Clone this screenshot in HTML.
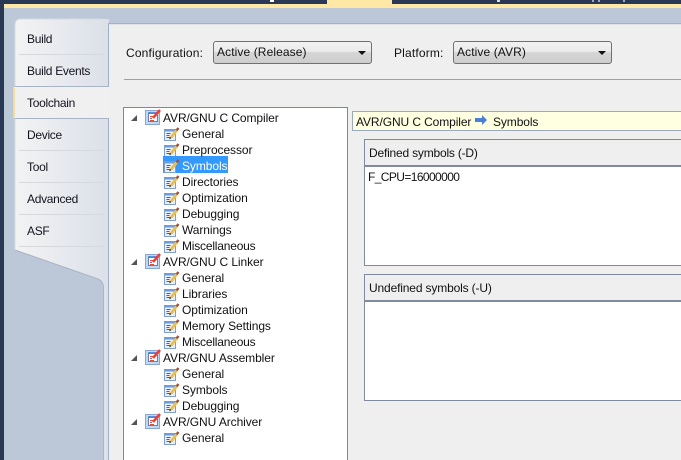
<!DOCTYPE html>
<html><head><meta charset="utf-8"><style>
html,body{margin:0;padding:0;width:681px;height:460px;overflow:hidden;background:#bcc7d8}
body{position:relative;font:12px/16px "Liberation Sans",sans-serif;color:#111;letter-spacing:-.08px}
div,span.t,svg.i{position:absolute}
.t{position:absolute;white-space:nowrap;height:16px}
.tab{position:absolute;left:27px;white-space:nowrap;color:#15121f;letter-spacing:-.3px}
.sep{position:absolute;left:19px;width:85px;height:1px;background:#d4d8df}
.combo{position:absolute;top:41px;height:21px;border:1px solid #707070;border-radius:3px;background:linear-gradient(#f2f2f2 0,#ebebeb 45%,#d6d6d6 50%,#cdcdcd 100%);line-height:21px;padding-left:3px;box-sizing:content-box;letter-spacing:.1px}
.combo:after{content:"";position:absolute;right:5px;top:9px;border-left:4px solid transparent;border-right:4px solid transparent;border-top:4px solid #111}
</style></head><body>
<svg width="0" height="0" style="position:absolute"><defs>
<g id="root"><rect x=".5" y="2.500" width="14" height="14" fill="#c4d8f2" stroke="#8aa5d0"/><rect x="3.500" y="5.500" width="9" height="8" fill="#fff" stroke="#4f86c8"/><path d="M3 4.500h10" stroke="#5a8fd0"/><path d="M5 8.500h3M5 10.500h2M5 12.500h4" stroke="#e04a40"/><path d="M8 10L15 2" stroke="#e8413a" stroke-width="2.500"/></g>
<g id="ch"><path d="M.5 3.500h11v11H.5z" fill="#e8f0fa" stroke="#7f9fd0"/><path d="M.5 3.500h11v2H.5z" fill="#6f9ad8"/><path d="M2.500 7.500h4M2.500 9.500h3M2.500 11.500h4" stroke="#525f75"/><path d="M7 11.500L12.500 4.500" stroke="#e9c050" stroke-width="3"/><path d="M12.500 4.500L14.500 2" stroke="#a5503a" stroke-width="2.500"/><path d="M5.500 13l1.500-1.500" stroke="#333"/></g>
</defs></svg>

<div style="left:0;top:0;width:681px;height:4px;background:#293955"></div>
<div style="left:0;top:0;width:4px;height:460px;background:#293955"></div>
<div style="left:4px;top:4px;width:677px;height:4px;background:#ffe8a6"></div>
<div style="left:327px;top:0;width:65px;height:4px;background:#ffe8a6"></div>
<div style="left:270px;top:0;width:4px;height:2px;background:#fff"></div>
<div style="left:497px;top:0;width:3px;height:2px;background:#d8dde6"></div>
<div style="left:592px;top:0;width:2px;height:2px;background:#9aa5b8"></div>
<div style="left:598px;top:0;width:2px;height:2px;background:#9aa5b8"></div>
<div style="left:623px;top:0;width:2px;height:2px;background:#9aa5b8"></div>

<!-- tab column -->
<svg style="position:absolute;left:0;top:0" width="110" height="460">
<defs><linearGradient id="tg" x1="0" x2="1" y1="0" y2="0"><stop offset="0" stop-color="#f3f3f3"/><stop offset="1" stop-color="#dbe0e8"/></linearGradient></defs>
<path d="M15 25Q15 19 21 19H109V287H103Q103 281 98 279L15 250Z" fill="url(#tg)"/>
<path d="M15 250L98 279Q103 281 103.500 287V460" fill="none" stroke="#a9b5c7" stroke-width="1"/>
<path d="M15 250V25Q15 19 21 19H100" fill="none" stroke="#d5dbe4"/>
<rect x="104" y="282" width="4" height="178" fill="#dde2ea"/>
</svg>
<div style="left:108px;top:23px;width:573px;height:437px;background:#efefef;border-top:1px solid #a5b2c5;border-left:1px solid #9db0c8"></div>
<div style="left:109px;top:24px;width:572px;height:1px;background:#dfe3e9"></div>

<div class="sep" style="top:54px"></div>
<div class="sep" style="top:86px;background:#a9b5c7;left:15px;width:94px"></div>
<div class="sep" style="top:150px"></div>
<div class="sep" style="top:182px"></div>
<div class="sep" style="top:214px"></div>
<div class="sep" style="top:246px"></div>
<div style="left:13px;top:87px;width:96px;height:31px;background:#f0f0f0;border-radius:2px 0 0 2px"></div>
<div style="left:13px;top:88px;width:2px;height:29px;background:#f5dc98"></div>
<div style="left:15px;top:118px;width:94px;height:1px;background:#a9b5c7"></div>

<span class="tab" style="top:31px">Build</span>
<span class="tab" style="top:63px">Build Events</span>
<span class="tab" style="top:95px">Toolchain</span>
<span class="tab" style="top:127px">Device</span>
<span class="tab" style="top:159px">Tool</span>
<span class="tab" style="top:191px">Advanced</span>
<span class="tab" style="top:223px">ASF</span>

<!-- toolbar -->
<span class="t" style="left:126px;top:45px;letter-spacing:.17px">Configuration:</span>
<div class="combo" style="left:213px;width:154px">Active (Release)</div>
<span class="t" style="left:394px;top:45px;letter-spacing:.17px">Platform:</span>
<div class="combo" style="left:453px;width:154px">Active (AVR)</div>
<div style="left:124px;top:79px;width:557px;height:1px;background:#a0a0a0"></div>

<!-- tree -->
<div style="left:123px;top:107px;width:223px;height:353px;background:#fff;border:1px solid #828790;border-bottom:0"></div>
<svg style="position:absolute;left:123px;top:107px" width="224" height="353">
<path d="M8 14h6V8z" fill="#555"/><use href="#root" x="22" y="1"/>
<use href="#ch" x="41" y="19"/><use href="#ch" x="41" y="35"/>
<rect x="40" y="49" width="65" height="17" fill="#3399ff"/>
<use href="#ch" x="41" y="51"/><use href="#ch" x="41" y="67"/><use href="#ch" x="41" y="83"/><use href="#ch" x="41" y="99"/><use href="#ch" x="41" y="115"/><use href="#ch" x="41" y="131"/>
<path d="M8 158h6V152z" fill="#555"/><use href="#root" x="22" y="145"/>
<use href="#ch" x="41" y="163"/><use href="#ch" x="41" y="179"/><use href="#ch" x="41" y="195"/><use href="#ch" x="41" y="211"/><use href="#ch" x="41" y="227"/>
<path d="M8 254h6V248z" fill="#555"/><use href="#root" x="22" y="241"/>
<use href="#ch" x="41" y="259"/><use href="#ch" x="41" y="275"/><use href="#ch" x="41" y="291"/>
<path d="M8 318h6V312z" fill="#555"/><use href="#root" x="22" y="305"/>
<use href="#ch" x="41" y="323"/>
</svg>
<span class="t" style="left:163px;top:110px">AVR/GNU C Compiler</span>
<span class="t" style="left:182px;top:126px">General</span>
<span class="t" style="left:182px;top:142px">Preprocessor</span>
<span class="t" style="left:182px;top:158px;color:#fff">Symbols</span>
<span class="t" style="left:182px;top:174px">Directories</span>
<span class="t" style="left:182px;top:190px">Optimization</span>
<span class="t" style="left:182px;top:206px">Debugging</span>
<span class="t" style="left:182px;top:222px">Warnings</span>
<span class="t" style="left:182px;top:238px;letter-spacing:-.2px">Miscellaneous</span>
<span class="t" style="left:163px;top:254px">AVR/GNU C Linker</span>
<span class="t" style="left:182px;top:270px">General</span>
<span class="t" style="left:182px;top:286px">Libraries</span>
<span class="t" style="left:182px;top:302px">Optimization</span>
<span class="t" style="left:182px;top:318px">Memory Settings</span>
<span class="t" style="left:182px;top:334px;letter-spacing:-.2px">Miscellaneous</span>
<span class="t" style="left:163px;top:350px">AVR/GNU Assembler</span>
<span class="t" style="left:182px;top:366px">General</span>
<span class="t" style="left:182px;top:382px">Symbols</span>
<span class="t" style="left:182px;top:398px">Debugging</span>
<span class="t" style="left:163px;top:414px">AVR/GNU Archiver</span>
<span class="t" style="left:182px;top:430px">General</span>

<!-- breadcrumb -->
<div style="left:352px;top:111px;width:329px;height:18px;background:#ffffe1;border:1px solid #9aa9bd;border-right:0"></div>
<span class="t" style="left:356px;top:114px;letter-spacing:-.1px">AVR/GNU C Compiler</span>
<svg style="position:absolute;left:475px;top:115px" width="13" height="11"><path d="M0 3h7V0l5 5-5 5V7H0z" fill="#4a7fd8"/></svg>
<span class="t" style="left:493px;top:114px;letter-spacing:-.1px">Symbols</span>

<!-- defined -->
<div style="left:364px;top:139px;width:317px;height:125px;background:#fff;border:1px solid #7f8a9c;border-right:0"></div>
<div style="left:365px;top:140px;width:316px;height:25px;background:#efefef;border-bottom:2px solid #7f8a9c"></div>
<span class="t" style="left:369px;top:145px;letter-spacing:-.2px">Defined symbols (-D)</span>
<span class="t" style="left:368px;top:169px;letter-spacing:-.6px">F_CPU=16000000</span>

<!-- undefined -->
<div style="left:364px;top:274px;width:317px;height:125px;background:#fff;border:1px solid #7f8a9c;border-right:0"></div>
<div style="left:365px;top:275px;width:316px;height:25px;background:#efefef;border-bottom:2px solid #7f8a9c"></div>
<span class="t" style="left:369px;top:280px;letter-spacing:-.15px">Undefined symbols (-U)</span>
</body></html>
